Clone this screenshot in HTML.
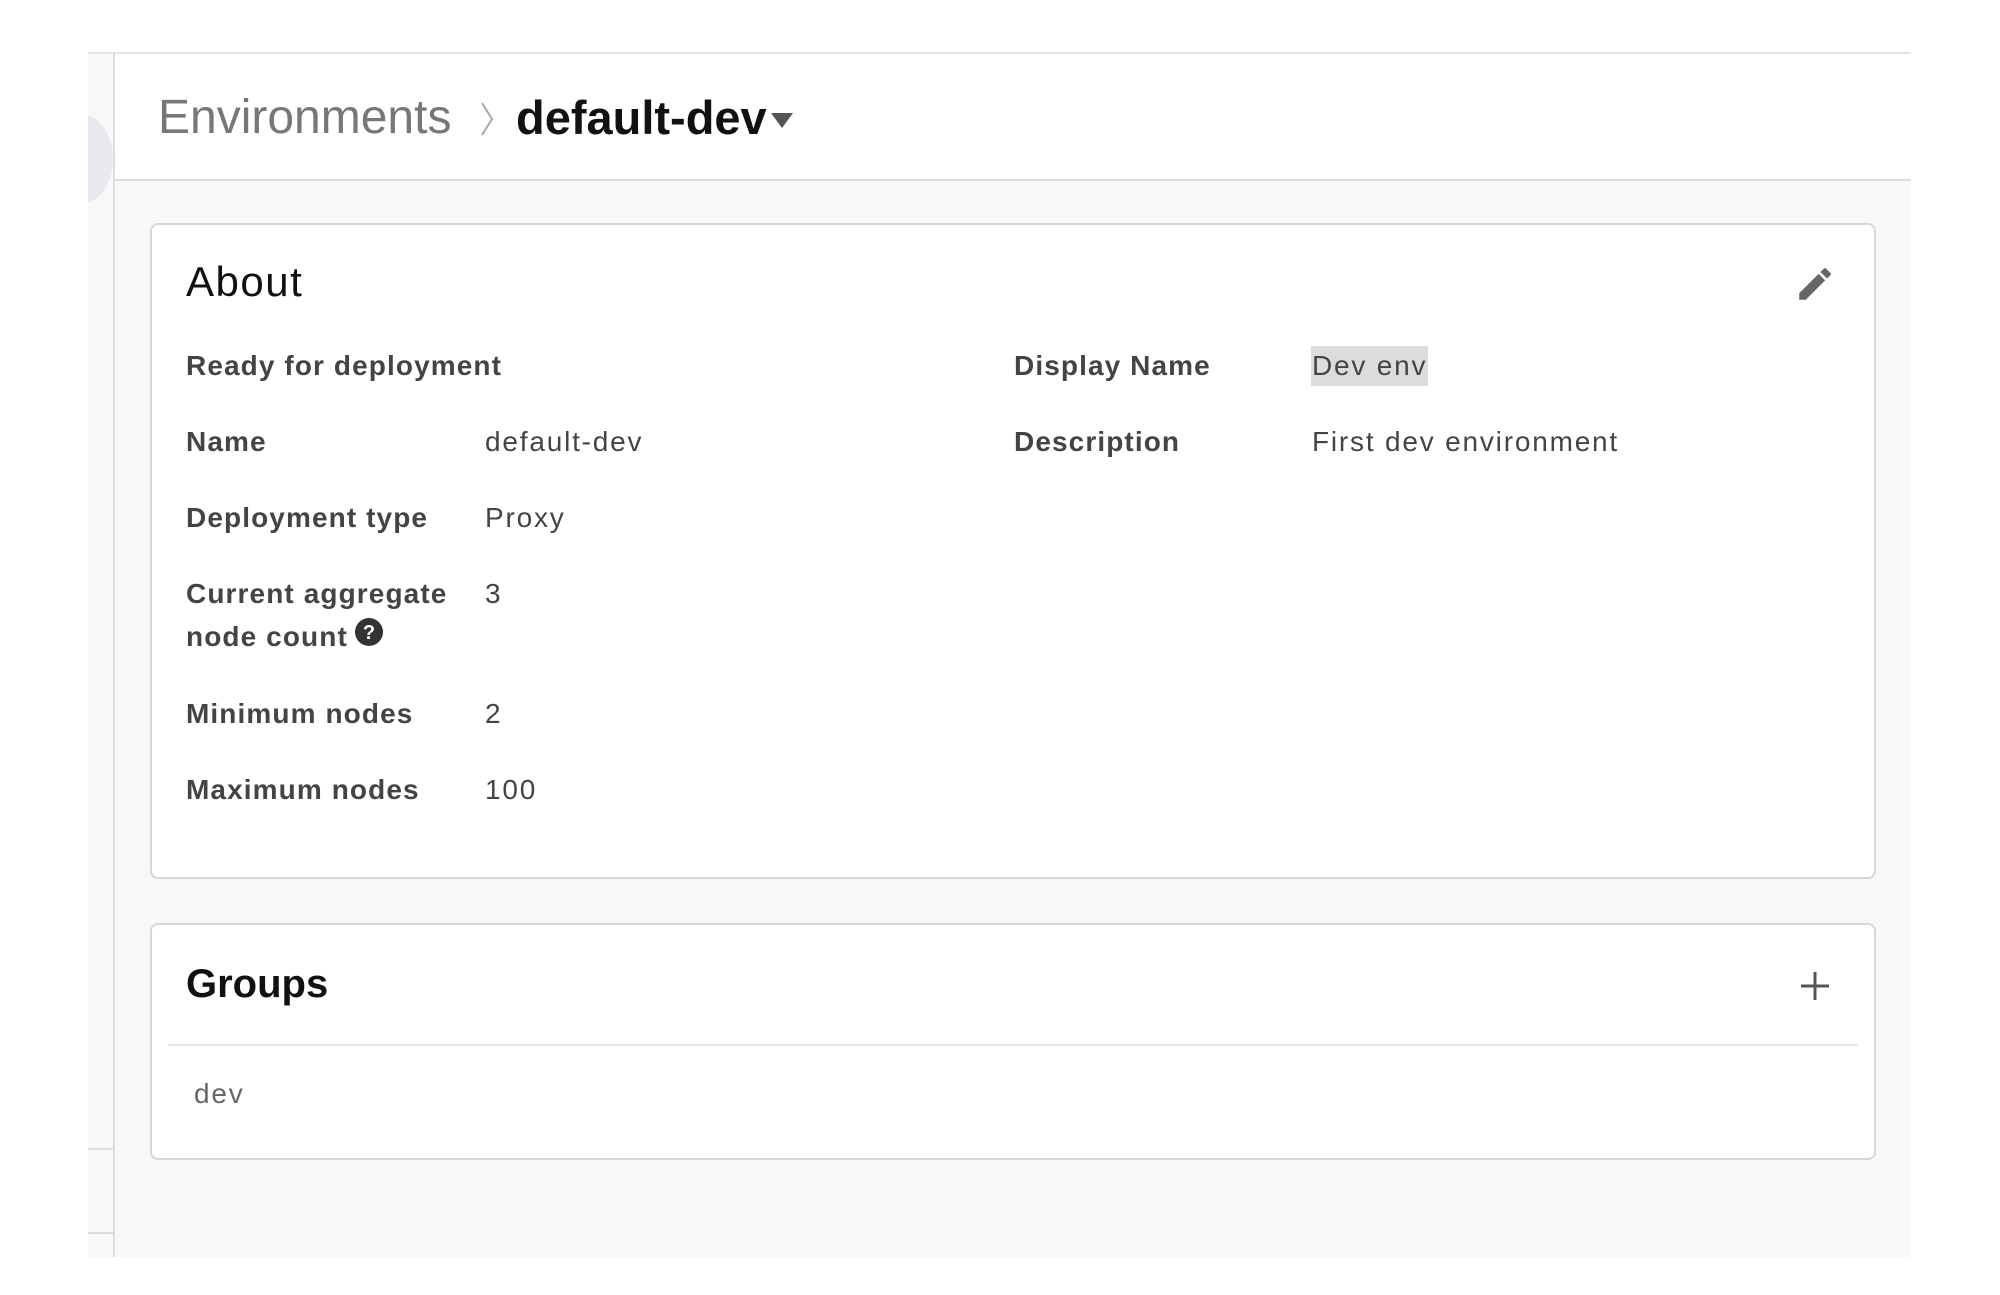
<!DOCTYPE html>
<html><head><meta charset="utf-8"><style>
*{box-sizing:border-box;margin:0;padding:0}
body{width:2000px;height:1295px;background:#fff;font-family:"Liberation Sans",sans-serif;position:relative;overflow:hidden}
.abs{position:absolute;white-space:nowrap}
.lbl{position:absolute;font-size:28px;font-weight:bold;color:#444;white-space:nowrap;transform:translateY(-50%);letter-spacing:1.1px}
.val{position:absolute;font-size:28px;color:#444;white-space:nowrap;transform:translateY(-50%);letter-spacing:1.8px}
</style></head><body>
<div class="abs" style="left:88px;top:52px;width:1823px;height:1205px;background:#f7f8f8;border-top:2px solid #e2e3e4"></div>
<div class="abs" style="left:88px;top:54px;width:27px;height:1203px;background:#f7f8f8;border-right:2px solid #dcdddf;overflow:hidden">
 <div style="position:absolute;left:-40px;top:60px;width:65px;height:90px;border-radius:50%;background:#e8e9ee"></div>
 <div style="position:absolute;left:0;top:1094px;width:27px;height:2px;background:#dcdddf"></div>
 <div style="position:absolute;left:0;top:1178px;width:27px;height:2px;background:#dcdddf"></div>
</div>
<div class="abs" style="left:115px;top:54px;width:1796px;height:127px;background:#fff;border-bottom:2px solid #dcdddf"></div>
<div class="abs" style="left:158px;top:90px;font-size:48px;color:#777">Environments</div>
<svg class="abs" style="left:478px;top:101px" width="18" height="36"><path d="M4 2 L14 18 L4 34" fill="none" stroke="#aaa" stroke-width="2"/></svg>
<div class="abs" style="left:516px;top:90px;font-size:47px;font-weight:bold;color:#111">default-dev</div>
<svg class="abs" style="left:771px;top:113px" width="22" height="16"><path d="M0 0 H22 L11 15 Z" fill="#555"/></svg>

<div class="abs" style="left:150px;top:223px;width:1726px;height:656px;background:#fff;border:2px solid #d6d7d8;border-radius:8px"></div>
<div class="abs" style="left:186px;top:258px;font-size:42px;color:#111;letter-spacing:1.5px">About</div>
<svg class="abs" style="left:1794px;top:262px" width="42" height="44" viewBox="0 0 24 24"><path d="M3 17.25V21h3.75L17.81 9.94l-3.75-3.75L3 17.25zM20.71 7.04a1 1 0 0 0 0-1.41l-2.34-2.34a1 1 0 0 0-1.41 0l-1.83 1.83 3.75 3.75 1.83-1.83z" fill="#666"/></svg>

<div class="lbl" style="left:186px;top:366px">Ready for deployment</div>
<div class="lbl" style="left:186px;top:442px">Name</div><div class="val" style="left:485px;top:442px">default-dev</div>
<div class="lbl" style="left:186px;top:518px">Deployment type</div><div class="val" style="left:485px;top:518px">Proxy</div>
<div class="lbl" style="left:186px;top:594px">Current aggregate</div><div class="val" style="left:485px;top:594px">3</div>
<div class="lbl" style="left:186px;top:637px">node count</div>
<svg class="abs" style="left:355px;top:618px" width="28" height="28" viewBox="0 0 28 28"><circle cx="14" cy="14" r="14" fill="#333"/><text x="14" y="21" font-size="20" font-weight="bold" fill="#fff" text-anchor="middle" font-family="Liberation Sans">?</text></svg>
<div class="lbl" style="left:186px;top:714px">Minimum nodes</div><div class="val" style="left:485px;top:714px">2</div>
<div class="lbl" style="left:186px;top:790px">Maximum nodes</div><div class="val" style="left:485px;top:790px">100</div>

<div class="lbl" style="left:1014px;top:366px">Display Name</div>
<div class="val" style="left:1311px;top:366px;background:#dcdcdc;padding:4px 1px">Dev env</div>
<div class="lbl" style="left:1014px;top:442px">Description</div><div class="val" style="left:1312px;top:442px">First dev environment</div>

<div class="abs" style="left:150px;top:923px;width:1726px;height:237px;background:#fff;border:2px solid #d6d7d8;border-radius:8px"></div>
<div class="abs" style="left:186px;top:962px;font-size:40px;font-weight:bold;color:#111">Groups</div>
<svg class="abs" style="left:1799px;top:970px" width="32" height="32"><path d="M16 2V30M2 16H30" stroke="#555" stroke-width="3"/></svg>
<div class="abs" style="left:168px;top:1044px;width:1690px;height:2px;background:#e6e6e6"></div>
<div class="val" style="left:194px;top:1094px;color:#666">dev</div>
</body></html>
